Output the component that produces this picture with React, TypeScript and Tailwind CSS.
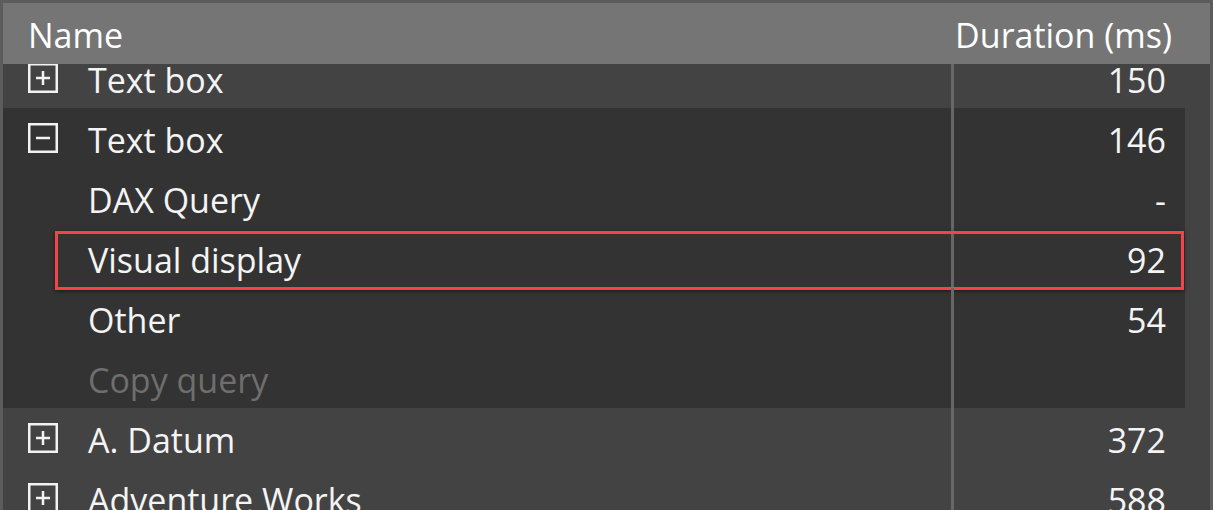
import React from 'react';

type Row = {
  name: string;
  ms: string;
  icon?: 'plus' | 'minus';
  muted?: boolean;
  selected?: boolean;
};

const rows: Row[] = [
  { name: 'Text box', ms: '150', icon: 'plus' },
];

const group: Row[] = [
  { name: 'Text box', ms: '146', icon: 'minus' },
  { name: 'DAX Query', ms: '-' },
  { name: 'Visual display', ms: '92', selected: true },
  { name: 'Other', ms: '54' },
  { name: 'Copy query', ms: '', muted: true },
];

const after: Row[] = [
  { name: 'A. Datum', ms: '372', icon: 'plus' },
  { name: 'Adventure Works', ms: '588', icon: 'plus' },
];

const ToggleBox: React.FC<{ kind: 'plus' | 'minus' }> = ({ kind }) => (
  <svg width="30" height="30" viewBox="0 0 30 30" className="shrink-0">
    <rect x="1.25" y="1.25" width="27.5" height="27.5" fill="none" stroke="#f2f2f2" strokeWidth="2.5" />
    <line x1="8" y1="15" x2="22" y2="15" stroke="#f2f2f2" strokeWidth="2.5" />
    {kind === 'plus' && <line x1="15" y1="8" x2="15" y2="22" stroke="#f2f2f2" strokeWidth="2.5" />}
  </svg>
);

const TreeRow: React.FC<{ row: Row }> = ({ row }) => (
  <div className="relative flex h-[60px] w-[1182px]">
    <div className="flex w-[948px] items-center pl-[25px]">
      <div className="w-[60px]">{row.icon && <ToggleBox kind={row.icon} />}</div>
      <span className={'pt-[3px] ' + (row.muted ? 'text-[#6e6e6e]' : 'text-[#f4f4f4]')}>{row.name}</span>
    </div>
    <div className="flex flex-1 items-center justify-end border-l-[3px] border-[#676767] pr-[19px] pt-[3px] text-[#f4f4f4]">
      {row.ms}
    </div>
    {row.selected && (
      <div className="pointer-events-none absolute left-[52px] top-[3px] h-[59px] w-[1129px] border-[3px] border-[#f2444a] shadow-[0_1px_4px_rgba(0,0,0,0.5)]" />
    )}
  </div>
);

export default function App() {
  return (
    <div
      className="flex h-[510px] w-[1213px] flex-col overflow-hidden bg-[#5c5c5c] px-[3px] pt-[3px] text-[34px] leading-none"
      style={{ fontFamily: '"Segoe UI", "Open Sans", "Noto Sans", sans-serif' }}
    >
      <div className="flex h-[61px] w-[1207px] shrink-0 items-center justify-between bg-[#757575] pl-[25px] pr-[38px] pt-[2px] text-white">
        <span>Name</span>
        <span>Duration (ms)</span>
      </div>
      <div className="w-[1207px] flex-1 overflow-hidden bg-[#434343]">
        <div className="-mt-[16px]">
          {rows.map((r, i) => (
            <TreeRow key={'a' + i} row={r} />
          ))}
          <div className="w-[1182px] bg-[#333333]">
            {group.map((r, i) => (
              <TreeRow key={'g' + i} row={r} />
            ))}
          </div>
          {after.map((r, i) => (
            <TreeRow key={'b' + i} row={r} />
          ))}
        </div>
      </div>
    </div>
  );
}
